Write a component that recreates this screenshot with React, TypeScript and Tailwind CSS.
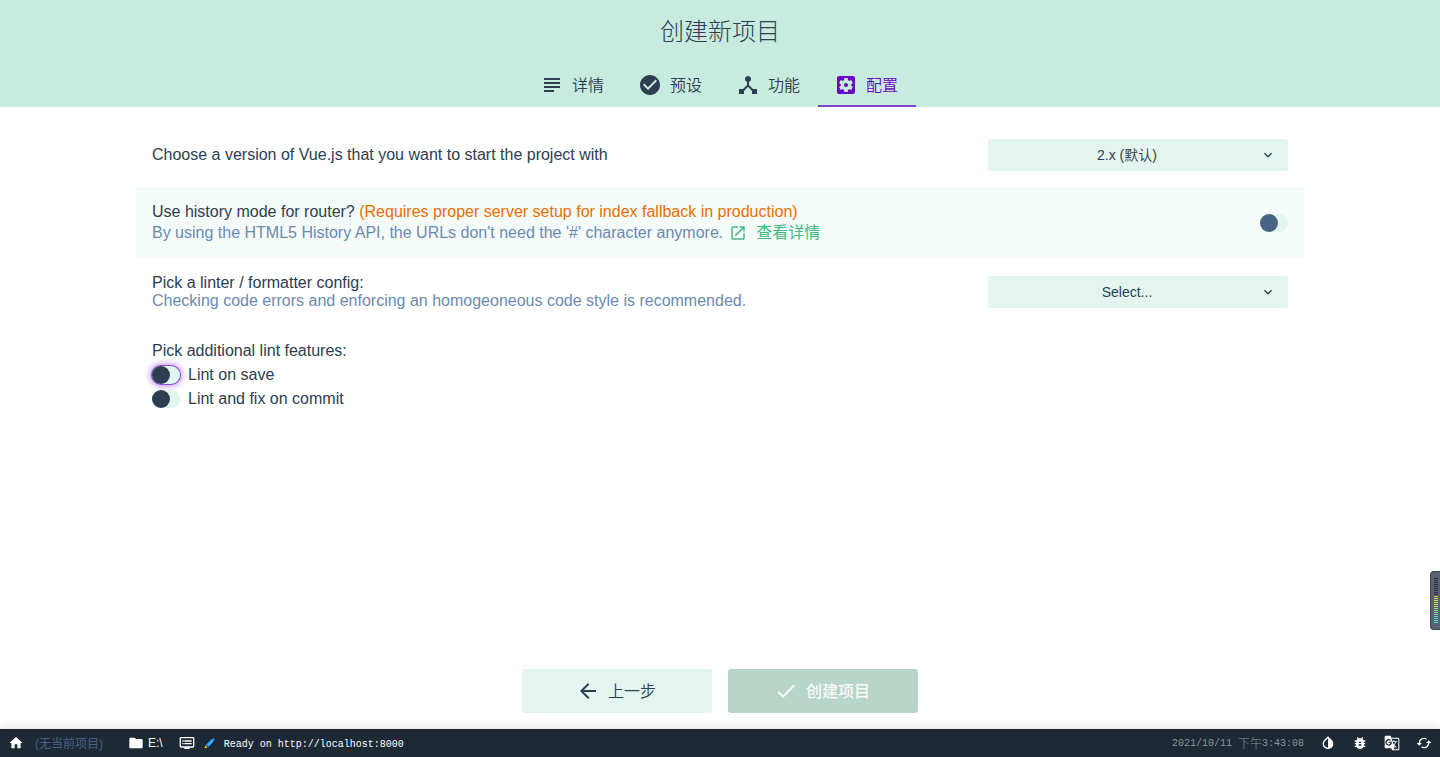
import type { ReactNode } from 'react'
import type { IconType } from 'react-icons'
import {
  MdArrowBack,
  MdBugReport,
  MdCached,
  MdCheck,
  MdCheckCircle,
  MdDeviceHub,
  MdDvr,
  MdFolder,
  MdGTranslate,
  MdHome,
  MdInvertColors,
  MdKeyboardArrowDown,
  MdOpenInNew,
  MdSettingsApplications,
  MdSubject,
} from 'react-icons/md'

const tabs: { label: string; icon: IconType; active?: boolean }[] = [
  { label: '详情', icon: MdSubject },
  { label: '预设', icon: MdCheckCircle },
  { label: '功能', icon: MdDeviceHub },
  { label: '配置', icon: MdSettingsApplications, active: true },
]

function Select({ id, value }: { id: string; value: string }) {
  return (
    <div className="relative w-[300px] shrink-0">
      <select
        id={id}
        defaultValue={value}
        className="block h-8 w-full appearance-none rounded-[3px] bg-[#e4f5ef] pr-[22px] text-center text-sm font-[350] [text-align-last:center] outline-none"
      >
        <option>{value}</option>
      </select>
      <MdKeyboardArrowDown className="pointer-events-none absolute top-2 right-3 size-4" />
    </div>
  )
}

function Toggle({ id, look = '' }: { id: string; look?: string }) {
  return (
    <input
      id={id}
      type="checkbox"
      role="switch"
      className={`block h-[18px] w-7 shrink-0 appearance-none rounded-full bg-[#e4f5ef] outline-none before:block before:size-[18px] before:rounded-full before:bg-[#2c3e50] checked:before:ml-auto ${look}`}
    />
  )
}

function Row({ children, look = '' }: { children: ReactNode; look?: string }) {
  return <div className={`flex items-center justify-between gap-4 p-4 ${look}`}>{children}</div>
}

function LogIcon() {
  return (
    <svg viewBox="0 0 14 14" className="size-[14px]" aria-hidden="true">
      <path d="M13.2 1 7.2 3 1.6 8.8.8 13l5-.4L11 7.2Z" fill="#0a1016" />
      <path d="M12.4 1.6 7.6 3.6 2.4 9l3 2.8 4.8-5.2Z" fill="#1f7fdc" />
      <path d="M9.8 3.2 4.6 8.4l1.2 1 5-5.4Z" fill="#4fc0ff" />
      <path d="m2.2 9.2-.8 3.2 3.2-.6Z" fill="#f4d21f" />
    </svg>
  )
}

function Meter() {
  const bars = [
    'bg-[#2b303b]', 'bg-[#2b303b]', 'bg-[#2b303b]', 'bg-[#2b303b]', 'bg-[#2b303b]',
    'bg-[#2b303b]', 'bg-[#2b303b]', 'bg-[#2b303b]', 'bg-[#2b303b]',
    'bg-[#f2c82e]', 'bg-[#e6d838]', 'bg-[#dbe043]', 'bg-[#cbe350]', 'bg-[#b9e35c]',
    'bg-[#a6e369]', 'bg-[#94e377]', 'bg-[#83e286]', 'bg-[#73e296]', 'bg-[#64e2a6]',
    'bg-[#57e2b5]', 'bg-[#4ce2c4]', 'bg-[#43e2d0]', 'bg-[#3ce2da]',
  ]
  return (
    <div className="fixed right-0 bottom-[127px] flex w-[10px] flex-col gap-px rounded-l-[4px] border border-r-0 border-[#3d4350] bg-[#596172] py-[6px] pl-[3px]">
      {bars.map((bar, i) => (
        <span key={i} className={`h-px w-1 ${bar}`} />
      ))}
    </div>
  )
}

export default function App() {
  return (
    <div className="flex min-h-screen flex-col bg-white font-['Liberation_Sans','Noto_Sans_CJK_SC',sans-serif] text-base text-[#2c3e50]">
      <header className="flex flex-col items-center bg-[#c8ebdf]">
        <h1 className="flex h-[63px] items-center pt-px text-2xl font-light">创建新项目</h1>
        <nav className="flex">
          {tabs.map(({ label, icon: Icon, active }) => (
            <button
              key={label}
              type="button"
              className={`flex h-11 items-center gap-2 border-b-2 pt-[2px] pr-[18px] pl-4 font-[350] ${
                active ? 'border-[#7f47c7] text-[#6806c1]' : 'border-transparent'
              }`}
            >
              <Icon className="size-6" />
              <span className="pt-px">{label}</span>
            </button>
          ))}
        </nav>
      </header>

      <main className="mx-auto w-full max-w-[1200px] flex-1 p-4 leading-[18px]">
        <Row>
          <label htmlFor="version">Choose a version of Vue.js that you want to start the project with</label>
          <Select id="version" value="2.x (默认)" />
        </Row>

        <Row look="bg-[#f5fbf9]">
          <div>
            <label htmlFor="history" className="block">
              Use history mode for router?{' '}
              <span className="text-[#ea6e00]">(Requires proper server setup for index fallback in production)</span>
            </label>
            <div className="mt-[2px] flex h-[19px] items-center text-[#6b8ab0]">
              By using the HTML5 History API, the URLs don't need the '#' character anymore.
              <a href="#more" className="ml-[6px] flex items-center gap-2 text-[#42b983]">
                <MdOpenInNew className="size-[18px]" />
                <span className="pl-px">查看详情</span>
              </a>
            </div>
          </div>
          <Toggle id="history" look="before:bg-[#486384]" />
        </Row>

        <Row>
          <label htmlFor="linter">
            Pick a linter / formatter config:
            <span className="block text-[#6b8ab0]">
              Checking code errors and enforcing an homogeoneous code style is recommended.
            </span>
          </label>
          <Select id="linter" value="Select..." />
        </Row>

        <fieldset className="p-4">
          <legend className="float-left mb-[3px] w-full">Pick additional lint features:</legend>
          <div className="clear-both flex h-6 items-center gap-2">
            <Toggle id="on-save" look="shadow-[0_0_0_1px_#8a4fd0,0_0_6px_2px_#c08df0]" />
            <label htmlFor="on-save">Lint on save</label>
          </div>
          <div className="flex h-6 items-center gap-2">
            <Toggle id="on-commit" />
            <label htmlFor="on-commit">Lint and fix on commit</label>
          </div>
        </fieldset>
      </main>

      <div className="flex justify-center gap-4 p-4">
        <button
          type="button"
          className="flex h-11 w-[190px] items-center justify-center gap-2 rounded-[3px] bg-[#e4f5ef] pr-[2px] font-[350]"
        >
          <MdArrowBack className="size-6" />
          <span className="pt-px">上一步</span>
        </button>
        <button
          type="button"
          disabled
          className="flex h-11 w-[190px] items-center justify-center gap-2 rounded-[3px] bg-[#b7d5c8] pr-[2px] font-medium text-white/90"
        >
          <MdCheck className="size-6" />
          <span className="pt-px">创建项目</span>
        </button>
      </div>

      <footer className="flex h-7 items-center bg-[#1d2935] px-2 text-xs text-white shadow-[0_-2px_10px_rgba(0,0,0,0.12)]">
        <MdHome className="size-4" />
        <span className="ml-[11px] pt-px text-[#486384]">(无当前项目)</span>
        <MdFolder className="ml-[25px] size-4" />
        <span className="ml-1">E:\</span>
        <MdDvr className="ml-4 size-4" />
        <span className="ml-2">
          <LogIcon />
        </span>
        <span className="ml-[7px] pt-[3px] font-['Liberation_Mono',monospace] text-[10px]">
          Ready on http://localhost:8000
        </span>
        <time className="ml-auto flex items-center pt-[2px] text-[#8e949a]">
          <span className="font-['Liberation_Mono',monospace] text-[10px] whitespace-pre">2021/10/11 </span>
          <span className="font-light">下午</span>
          <span className="font-['Liberation_Mono',monospace] text-[10px]">3:43:08</span>
        </time>
        <div className="ml-4 flex gap-4">
          <MdInvertColors className="size-4" />
          <MdBugReport className="size-4" />
          <MdGTranslate className="size-4" />
          <MdCached className="size-4" />
        </div>
      </footer>

      <Meter />
    </div>
  )
}
